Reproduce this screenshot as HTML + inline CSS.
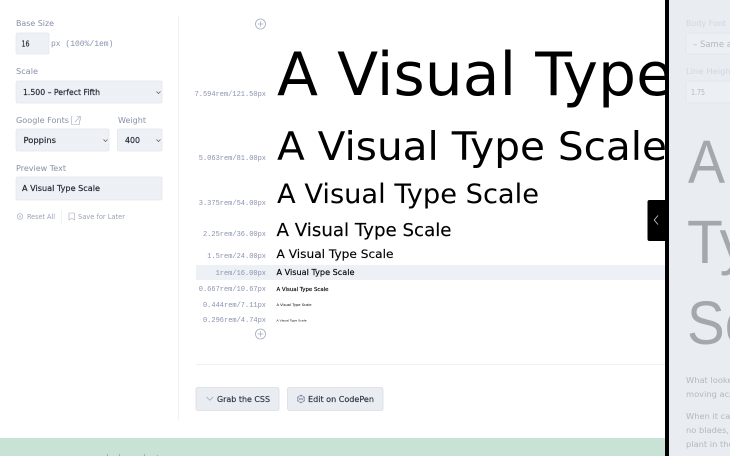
<!DOCTYPE html>
<html lang="en"><head><meta charset="utf-8"><title>Type Scale</title>
<style>
html,body{margin:0;padding:0;width:730px;height:456px;overflow:hidden;background:#fff}
svg{display:block}
.l{font:8px "DejaVu Sans",sans-serif;fill:#8890a8}
.v{font:8px "DejaVu Sans",sans-serif;fill:#1c2230;stroke:#1c2230;stroke-width:.16px}
.m{font:7px "Liberation Mono",monospace;fill:#8a92ae;text-anchor:end}
.d{font-family:"DejaVu Sans",sans-serif;fill:#000}
.t{stroke:#000;stroke-width:.14px}
.p{font:8.3px "DejaVu Sans",sans-serif;fill:#b4b7bd}
.q{font:8px "DejaVu Sans",sans-serif;fill:#d3d6de}
</style></head><body>
<svg width="730" height="456" viewBox="0 0 730 456" xmlns="http://www.w3.org/2000/svg">
<rect width="730" height="456" fill="#fff"/>
<rect x="178" y="15" width="1" height="405" fill="#eff1f5"/>
<text class="l" x="16" y="26" textLength="38" lengthAdjust="spacingAndGlyphs">Base Size</text>
<rect x="16" y="33" width="33" height="21" rx="1.5" fill="#edf0f4" stroke="#e2e5ec" stroke-width=".7"/>
<text class="v" x="21.500" y="46.500" textLength="8" lengthAdjust="spacingAndGlyphs">16</text>
<text x="51" y="46" style="font:8px 'Liberation Mono',monospace;fill:#8a92ae">px (100%/1em)</text>
<text class="l" x="16" y="74" textLength="22" lengthAdjust="spacingAndGlyphs">Scale</text>
<rect x="16" y="81" width="146" height="22" rx="1.5" fill="#edf0f4" stroke="#e2e5ec" stroke-width=".7"/>
<text class="v" x="23" y="95" textLength="77" lengthAdjust="spacingAndGlyphs">1.500 – Perfect Fifth</text>
<path d="M156.500 91.500l2 2 2-2" fill="none" stroke="#555" stroke-width=".7"/>
<text class="l" x="16" y="123" textLength="53" lengthAdjust="spacingAndGlyphs">Google Fonts</text>
<path d="M72.500 116.500h-1v8h8v-5M75 122l5-5.500M76.500 116.500h4v4" fill="none" stroke="#a3a9bd" stroke-width=".6"/>
<text class="l" x="118" y="123" textLength="28" lengthAdjust="spacingAndGlyphs">Weight</text>
<rect x="16" y="129" width="93" height="22" rx="1.500" fill="#edf0f4" stroke="#e2e5ec" stroke-width=".7"/>
<text class="v" x="23.500" y="143" textLength="32.500" lengthAdjust="spacingAndGlyphs">Poppins</text>
<path d="M103.500 139.500l2 2 2-2" fill="none" stroke="#555" stroke-width=".7"/>
<rect x="117.500" y="129" width="44.500" height="22" rx="1.500" fill="#edf0f4" stroke="#e2e5ec" stroke-width=".7"/>
<text class="v" x="125" y="143" textLength="15" lengthAdjust="spacingAndGlyphs">400</text>
<path d="M156.500 139.500l2 2 2-2" fill="none" stroke="#555" stroke-width=".7"/>
<text class="l" x="16" y="171" textLength="50" lengthAdjust="spacingAndGlyphs">Preview Text</text>
<rect x="16" y="177" width="146" height="23" rx="1.500" fill="#edf0f4" stroke="#e2e5ec" stroke-width=".7"/>
<text class="v" x="22" y="191" textLength="78" lengthAdjust="spacingAndGlyphs">A Visual Type Scale</text>
<circle cx="20" cy="216.500" r="2.800" fill="none" stroke="#a0a7bd" stroke-width=".6"/>
<path d="M18.800 215.300l2.400 2.400M21.200 215.300l-2.400 2.400" stroke="#a0a7bd" stroke-width=".5"/>
<text x="27" y="219" textLength="28" lengthAdjust="spacingAndGlyphs" style="font:7px 'DejaVu Sans',sans-serif;fill:#9aa1b8">Reset All</text>
<rect x="61" y="210" width="1" height="13" fill="#eff1f5"/>
<path d="M69 213h5.500v7l-2.750-1.700-2.750 1.700z" fill="none" stroke="#a0a7bd" stroke-width=".6"/>
<text x="78" y="219" textLength="47" lengthAdjust="spacingAndGlyphs" style="font:7px 'DejaVu Sans',sans-serif;fill:#9aa1b8">Save for Later</text>

<circle cx="260.500" cy="24" r="5" fill="none" stroke="#a3aac0" stroke-width=".8"/>
<path d="M260.500 21.200v5.600M257.700 24h5.600" stroke="#a3aac0" stroke-width=".7"/>
<rect x="196" y="265" width="470" height="15" fill="#edf0f4"/>
<text class="m" x="266" y="96">7.594rem/121.50px</text>
<text class="m" x="266" y="160">5.063rem/81.00px</text>
<text class="m" x="266" y="205">3.375rem/54.00px</text>
<text class="m" x="266" y="236">2.25rem/36.00px</text>
<text class="m" x="266" y="258">1.5rem/24.00px</text>
<text class="m" x="266" y="275">1rem/16.00px</text>
<text class="m" x="266" y="291">0.667rem/10.67px</text>
<text class="m" x="266" y="307">0.444rem/7.11px</text>
<text class="m" x="266" y="322">0.296rem/4.74px</text>
<text class="d" x="277" y="95" font-size="60" textLength="396" lengthAdjust="spacingAndGlyphs">A Visual Type</text>
<text class="d" x="277" y="160" font-size="39.500" textLength="390" lengthAdjust="spacingAndGlyphs">A Visual Type Scale</text>
<text class="d" x="277" y="203" font-size="26.500" textLength="262" lengthAdjust="spacingAndGlyphs">A Visual Type Scale</text>
<text class="d t" x="276.500" y="236" font-size="17.800" textLength="175" lengthAdjust="spacingAndGlyphs">A Visual Type Scale</text>
<text class="d t" x="276.500" y="258" font-size="11.900" textLength="117" lengthAdjust="spacingAndGlyphs">A Visual Type Scale</text>
<text class="d t" x="276.500" y="275" font-size="8" textLength="78" lengthAdjust="spacingAndGlyphs">A Visual Type Scale</text>
<text class="d t" x="276.500" y="291" font-size="5.300" textLength="52" lengthAdjust="spacingAndGlyphs">A Visual Type Scale</text>
<text class="d" x="276.500" y="306" font-size="3.550" textLength="35" lengthAdjust="spacingAndGlyphs">A Visual Type Scale</text>
<text class="d" x="276.500" y="321.500" font-size="2.370" textLength="30" lengthAdjust="spacingAndGlyphs">A Visual Type Scale</text>
<circle cx="260.500" cy="334" r="5" fill="none" stroke="#a3aac0" stroke-width=".8"/>
<path d="M260.500 331.200v5.600M257.700 334h5.600" stroke="#a3aac0" stroke-width=".7"/>
<rect x="196" y="364" width="470" height="1" fill="#eff1f5"/>

<rect x="196" y="387.500" width="83" height="23" rx="2" fill="#e9ecf1" stroke="#d9dde5" stroke-width=".8"/>
<path d="M206.500 397l3.300 3.300 3.300-3.300" fill="none" stroke="#98a0b8" stroke-width=".7"/>
<text x="217" y="402" textLength="53" lengthAdjust="spacingAndGlyphs" style="font:8px 'DejaVu Sans',sans-serif;fill:#2c3345;stroke:#2c3345;stroke-width:.16px">Grab the CSS</text>
<rect x="287.500" y="387.500" width="95.500" height="23" rx="2" fill="#e9ecf1" stroke="#d9dde5" stroke-width=".8"/>
<path d="M301 395l3.500 2.200v3.600l-3.500 2.200-3.500-2.200v-3.600zM297.500 397.200l3.500 2.200 3.500-2.200M297.500 400.800l3.500-2.200 3.500 2.200M301 395v2M301 401v2" fill="none" stroke="#7d859c" stroke-width=".6"/>
<text x="308" y="402" textLength="66" lengthAdjust="spacingAndGlyphs" style="font:8px 'DejaVu Sans',sans-serif;fill:#2c3345;stroke:#2c3345;stroke-width:.16px">Edit on CodePen</text>

<rect x="0" y="438" width="666" height="18" fill="#c8e2d6"/>
<rect x="107" y="454" width="1" height="2" fill="#9fb5aa"/>
<rect x="119" y="454" width="1" height="2" fill="#9fb5aa"/>
<rect x="144" y="454" width="1" height="2" fill="#9fb5aa"/>
<rect x="157" y="455" width="1" height="1" fill="#9fb5aa"/>

<path d="M665 200h-15.500a2 2 0 0 0-2 2v37a2 2 0 0 0 2 2h15.500z" fill="#000"/>
<path d="M658 215.500l-3.800 4.500 3.800 4.500" fill="none" stroke="#d5d5d5" stroke-width=".8"/>
<rect x="665" y="0" width="4" height="456" fill="#000"/>
<rect x="669" y="0" width="61" height="456" fill="#e9ecf1"/>
<text class="q" x="686" y="26" textLength="40" lengthAdjust="spacingAndGlyphs">Body Font</text>
<rect x="686" y="33" width="60" height="21" rx="1.500" fill="#eceff3" stroke="#e2e5ea" stroke-width=".7"/>
<text x="693" y="47" style="font:8.500px 'DejaVu Sans',sans-serif;fill:#b4b7bd">– Same as</text>
<text class="q" x="686" y="74" textLength="48" lengthAdjust="spacingAndGlyphs">Line Height</text>
<rect x="686" y="81" width="60" height="22" rx="1.500" fill="#eceff3" stroke="#e2e5ea" stroke-width=".7"/>
<text x="691" y="95" textLength="14" lengthAdjust="spacingAndGlyphs" style="font:8px 'DejaVu Sans',sans-serif;fill:#b4b7bd">1.75</text>
<g style="font:60.750px 'Liberation Sans',sans-serif;fill:#a4a7ab">
<text x="688" y="183" textLength="37" lengthAdjust="spacingAndGlyphs">A</text>
<text x="687" y="263" textLength="62" lengthAdjust="spacingAndGlyphs">Ty</text>
<text x="687" y="344" textLength="66" lengthAdjust="spacingAndGlyphs">Sc</text>
</g>
<text class="p" x="686" y="383">What looked</text>
<text class="p" x="686" y="397">moving acr</text>
<text class="p" x="686" y="419">When it cam</text>
<text class="p" x="686" y="433">no blades, </text>
<text class="p" x="686" y="447">plant in the</text>
</svg>
</body></html>
